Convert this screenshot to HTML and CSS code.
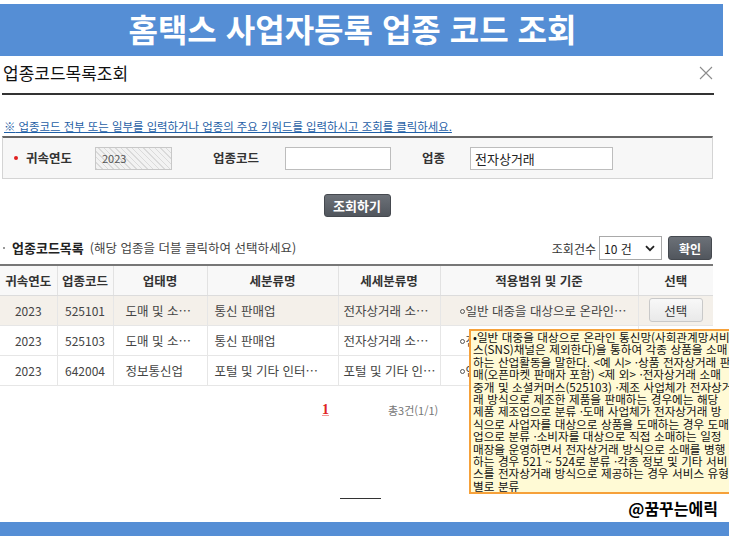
FILE: index.html
```html
<!DOCTYPE html>
<html lang="ko">
<head>
<meta charset="utf-8">
<title>홈택스 사업자등록 업종 코드 조회</title>
<link rel="stylesheet" href="styles.css">
</head>
<body>
<div class="page">
  <header class="banner"><h1 class="banner-title">홈택스 사업자등록 업종 코드 조회</h1></header>

  <section class="popup">
    <div class="popup-head">
      <h2 class="popup-title">업종코드목록조회</h2>
      <svg class="close" width="14" height="14" viewBox="0 0 14 14" aria-label="닫기"><path d="M1 1L13 13M13 1L1 13" stroke="#8c8c8c" stroke-width="1.1" fill="none"/></svg>
    </div>

    <p class="info"><span class="info-ico">※</span> 업종코드 전부 또는 일부를 입력하거나 업종의 주요 키워드를 입력하시고 조회를 클릭하세요.</p>

    <div class="search">
      <label class="s-label s-label-year"><span class="req"></span>귀속연도</label>
      <input class="s-input s-input-year" type="text" value="2023" readonly>
      <label class="s-label s-label-code">업종코드</label>
      <input class="s-input s-input-code" type="text" value="">
      <label class="s-label s-label-name">업종</label>
      <input class="s-input s-input-name" type="text" value="전자상거래">
    </div>

    <div class="actions"><button class="btn-dark btn-search" type="button">조회하기</button></div>

    <div class="list-head">
      <div class="list-title"><span class="bullet"></span><strong class="list-name">업종코드목록</strong><span class="hint">(해당 업종을 더블 클릭하여 선택하세요)</span></div>
      <div class="list-tools">
        <span class="count-label">조회건수</span>
        <div class="select"><span>10 건</span><svg width="10" height="7" viewBox="0 0 10 7"><path d="M1 1.2L5 5.2L9 1.2" stroke="#222" stroke-width="1.8" fill="none"/></svg></div>
        <button class="btn-dark btn-ok" type="button">확인</button>
      </div>
    </div>

    <table class="grid">
      <colgroup>
        <col class="c-year"><col class="c-code"><col class="c-type"><col class="c-sub"><col class="c-subsub"><col class="c-scope"><col class="c-pick">
      </colgroup>
      <thead>
        <tr><th>귀속연도</th><th>업종코드</th><th>업태명</th><th>세분류명</th><th>세세분류명</th><th>적용범위 및 기준</th><th>선택</th></tr>
      </thead>
      <tbody>
        <tr class="row-on">
          <td class="ctr">2023</td><td class="ctr">525101</td><td class="t-type">도매 및 소…</td><td class="t-sub">통신 판매업</td><td class="t-subsub">전자상거래 소…</td><td class="t-scope"><span class="ring"></span>일반 대중을 대상으로 온라인…</td><td class="ctr"><button class="btn-pick" type="button">선택</button></td>
        </tr>
        <tr>
          <td class="ctr">2023</td><td class="ctr">525103</td><td class="t-type">도매 및 소…</td><td class="t-sub">통신 판매업</td><td class="t-subsub">전자상거래 소…</td><td class="t-scope"><span class="ring"></span>전자상거래 소매…</td><td></td>
        </tr>
        <tr>
          <td class="ctr">2023</td><td class="ctr">642004</td><td class="t-type">정보통신업</td><td class="t-sub">포털 및 기타 인터…</td><td class="t-subsub">포털 및 기타 인…</td><td class="t-scope"><span class="ring"></span>인터넷 포털…</td><td></td>
        </tr>
      </tbody>
    </table>

    <div class="pager"><a class="page-num">1</a><span class="total">총3건(1/1)</span></div>
  </section>

  <div class="credit-row"><span class="stub"></span><span class="credit">@꿈꾸는에릭</span></div>
  <footer class="bottom-bar"></footer>

  <div class="tooltip">•일반 대중을 대상으로 온라인 통신망(사회관계망서비<br>스(SNS)채널은 제외한다)을 통하여 각종 상품을 소매<br>하는 산업활동을 말한다. &lt;예 시&gt; ·상품 전자상거래 판<br>매(오픈마켓 판매자 포함) &lt;제 외&gt; ·전자상거래 소매<br>중개 및 소셜커머스(525103) ·제조 사업체가 전자상거<br>래 방식으로 제조한 제품을 판매하는 경우에는 해당<br>제품 제조업으로 분류 ·도매 사업체가 전자상거래 방<br>식으로 사업자를 대상으로 상품을 도매하는 경우 도매<br>업으로 분류 ·소비자를 대상으로 직접 소매하는 일정<br>매장을 운영하면서 전자상거래 방식으로 소매를 병행<br>하는 경우 521 ~ 524로 분류 ·각종 정보 및 기타 서비<br>스를 전자상거래 방식으로 제공하는 경우 서비스 유형<br>별로 분류</div>
</div>
</body>
</html>
```
FILE: styles.css
```css
* { box-sizing: border-box; }
html, body { margin: 0; padding: 0; }
body {
  width: 729px;
  height: 536px;
  overflow: hidden;
  background: #fff;
  font-family: "Noto Sans CJK KR", "Noto Sans", sans-serif;
  color: #333;
}
.page {
  position: relative;
  width: 729px;
  height: 536px;
  display: flex;
  flex-direction: column;
  overflow: hidden;
}

/* banner */
.banner {
  flex-shrink: 0;
  margin: 4px 6px 0 0;
  height: 52px;
  background: #558ed5;
  display: flex;
  align-items: center;
  justify-content: center;
  padding: 0 18px 5px 0;
}
.banner-title {
  margin: 0;
  font-size: 32px;
  font-weight: 700;
  line-height: 40px;
  color: #fff;
}

/* popup */
.popup { width: 714px; flex-shrink: 0; }
.popup-head {
  margin-left: 2px;
  height: 39px;
  border-bottom: 2px solid #333;
  display: flex;
  align-items: center;
  justify-content: space-between;
  padding: 0 0 4px 1px;
}
.popup-title {
  margin: 0;
  font-size: 17px;
  font-weight: 400;
  line-height: 20px;
  color: #111;
}
.close { display: block; margin-right: 1px; }

.info {
  margin: 24px 0 0 4px;
  font-size: 11.4px;
  line-height: 14px;
  color: #1f5fa6;
  text-decoration: underline;
  white-space: nowrap;
}
.info-ico { color: #1f5fa6; }

/* search box */
.search {
  margin: 3px 0 0 2px;
  width: 711px;
  height: 43px;
  border: 1px solid #d4d4d4;
  border-top: 2px solid #666;
  background: #f7f7f7;
  display: flex;
  align-items: center;
}
.s-label {
  display: flex;
  align-items: center;
  font-size: 12.5px;
  font-weight: 700;
  line-height: 16px;
  color: #333;
}
.s-label-year { width: 92px; padding-left: 11px; }
.s-label-code { width: 113px; padding-left: 41px; }
.s-label-name { width: 79px; padding-left: 31px; }
.req {
  display: inline-block;
  width: 4px;
  height: 4px;
  border-radius: 50%;
  background: #e02020;
  margin-right: 8px;
}
.s-input {
  height: 23px;
  border: 1px solid #bdbdbd;
  background: #fff;
  font-family: "Noto Sans CJK KR", "Noto Sans", sans-serif;
  font-size: 13px;
  color: #222;
  padding: 0 4px;
  margin: 0;
  outline: none;
}
.s-input-year {
  width: 77px;
  font-size: 11px;
  color: #555;
  padding-left: 6px;
  border-color: #c8c8c8;
  background-color: #f2f2f2;
  background-image: repeating-linear-gradient(45deg, #dadada 0 1px, transparent 1px 4px);
}
.s-input-code { width: 106px; }
.s-input-name { width: 143px; }

/* actions */
.actions {
  display: flex;
  justify-content: center;
  margin-top: 15px;
}
.btn-dark {
  border: 1px solid #45494f;
  border-radius: 3px;
  background: linear-gradient(#6c7178, #51565d);
  color: #fff;
  font-family: "Noto Sans CJK KR", "Noto Sans", sans-serif;
  font-weight: 700;
  padding: 0;
  display: flex;
  align-items: center;
  justify-content: center;
}
.btn-search { width: 67px; height: 23px; font-size: 13px; }
.btn-ok { width: 44px; height: 24px; font-size: 12px; margin-left: 6px; }

/* list head */
.list-head {
  margin-top: 19px;
  margin-bottom: 4px;
  width: 712px;
  height: 24px;
  display: flex;
  align-items: center;
  justify-content: space-between;
}
.list-title {
  display: flex;
  align-items: center;
  padding-left: 3px;
  line-height: 16px;
}
.bullet {
  display: inline-block;
  width: 2px;
  height: 2px;
  background: #999;
  margin-right: 7px;
}
.list-name { font-size: 13px; font-weight: 700; color: #222; }
.hint { margin-left: 6px; font-size: 12.5px; color: #444; }
.list-tools { display: flex; align-items: center; }
.count-label { font-size: 12px; color: #333; margin-right: 3px; }
.select {
  width: 63px;
  height: 24px;
  border: 1px solid #a9a9a9;
  background: #fff;
  display: flex;
  align-items: center;
  justify-content: space-between;
  padding: 0 6px 0 4px;
  font-size: 12px;
  color: #222;
}
.select svg { display: block; }

/* table */
.grid {
  width: 713px;
  border-collapse: collapse;
  table-layout: fixed;
  border-top: 2px solid #777;
  border-bottom: 1px solid #cfcfcf;
}
.c-year { width: 57px; }
.c-code { width: 56px; }
.c-type { width: 94px; }
.c-sub { width: 131px; }
.c-subsub { width: 102px; }
.c-scope { width: 198px; }
.c-pick { width: 75px; }
.grid th {
  height: 30px;
  padding: 0;
  background: #f8f8f8;
  font-size: 12.5px;
  font-weight: 700;
  color: #333;
  border-left: 1px solid #e2e2e2;
  border-bottom: 1px solid #dcdcdc;
  white-space: nowrap;
}
.grid td {
  height: 30px;
  padding: 0;
  font-size: 12.5px;
  color: #444;
  border-left: 1px solid #e6e6e6;
  border-bottom: 1px solid #e6e6e6;
  white-space: nowrap;
  overflow: hidden;
}
.grid th:first-child, .grid td:first-child { border-left: none; }
.grid .row-on td { background: #f4f0ea; }
.grid td.ctr { text-align: center; font-size: 12px; }
.grid td.t-type { padding-left: 12px; }
.grid td.t-sub { padding-left: 7px; }
.grid td.t-subsub { padding-left: 5px; }
.grid td.t-scope { padding-left: 19px; }
.ring {
  display: inline-block;
  width: 5px;
  height: 5px;
  border: 1px solid #555;
  border-radius: 50%;
  margin-right: 1px;
  vertical-align: 2px;
}
.btn-pick {
  width: 54px;
  height: 24px;
  border: 1px solid #c9c9c9;
  border-radius: 3px;
  background: linear-gradient(#f8f8f8, #e9e9e9);
  font-family: "Noto Sans CJK KR", "Noto Sans", sans-serif;
  font-size: 12.5px;
  color: #333;
  padding: 0;
  vertical-align: middle;
}

/* pager */
.pager {
  margin-top: 17px;
  height: 14px;
  display: flex;
  align-items: center;
  padding-left: 322px;
}
.page-num {
  font-family: "Liberation Serif", serif;
  font-weight: 700;
  font-size: 14px;
  line-height: 14px;
  color: #e02424;
  text-decoration: underline;
  text-decoration-color: #f29a9a;
}
.total {
  margin-left: 59px;
  font-size: 11px;
  line-height: 14px;
  color: #777;
}

/* bottom */
.credit-row {
  margin-top: auto;
  margin-bottom: 4px;
  height: 20px;
  display: flex;
  align-items: flex-start;
  flex-shrink: 0;
}
.stub {
  margin-left: 340px;
  width: 41px;
  height: 1px;
  background: #333;
}
.credit {
  margin-left: auto;
  margin-right: 11px;
  font-size: 16px;
  font-weight: 700;
  line-height: 20px;
  color: #000;
}
.bottom-bar {
  flex-shrink: 0;
  height: 14px;
  background: #558ed5;
}

/* tooltip overlay */
.tooltip {
  position: absolute;
  left: 469px;
  top: 329px;
  width: 280px;
  border: 2px solid #f6a13a;
  background: #fffad5;
  padding: 0 0 0 2px;
  font-size: 11.6px;
  line-height: 12.4px;
  color: #111;
  white-space: nowrap;
  word-spacing: 0.3px;
}
```
